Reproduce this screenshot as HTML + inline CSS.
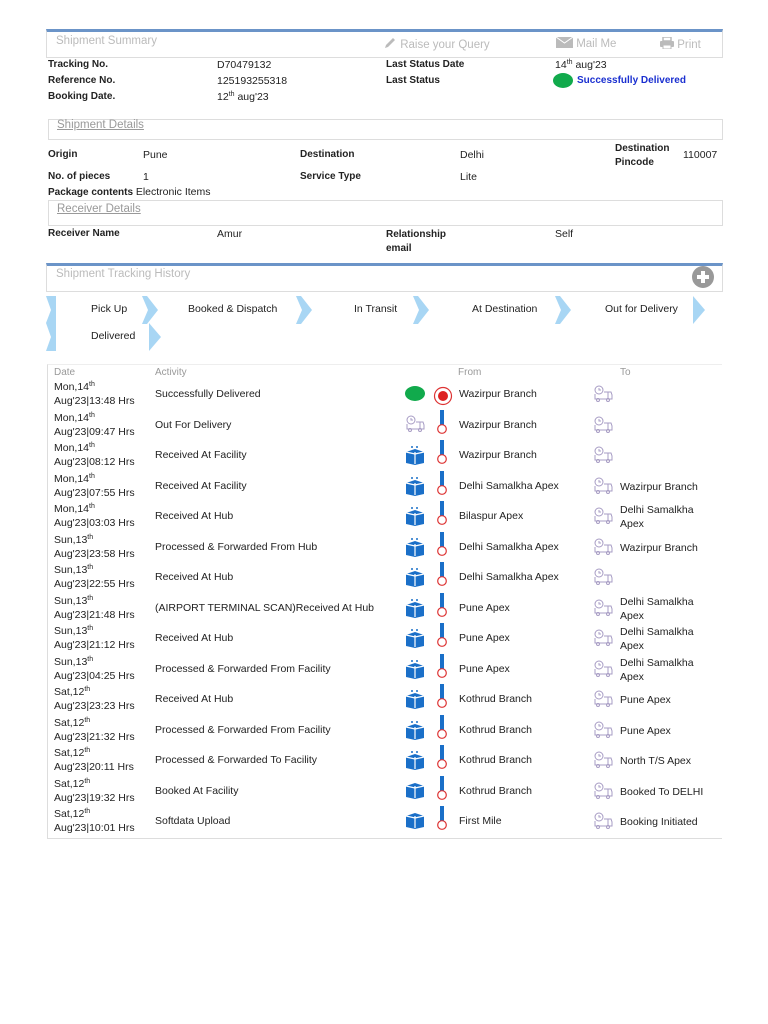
<!DOCTYPE html>
<html><head><meta charset="utf-8"><style>
body{margin:0;width:768px;height:1024px;background:#fff;font-family:"Liberation Sans",Arial,sans-serif;color:#222;position:relative;overflow:hidden}
.a{position:absolute;white-space:nowrap}
.b{font-weight:bold;font-size:10px}
.t{font-size:10.5px}
.g{color:#bbb;font-size:11.5px}
.box{position:absolute;border:1px solid #ddd;box-sizing:border-box}
sup{font-size:7px;vertical-align:4px;line-height:0}
.h{font-size:10px;color:#999}
</style></head><body>
<div class="box" style="left:46px;top:29px;width:677px;height:29px;border-top:3px solid #6b94c8"></div>
<div class="a g" style="left:56px;top:35px">Shipment Summary</div>
<div class="a g" style="left:384px;top:37px"><svg width="13" height="12" viewBox="0 0 13 12" style="vertical-align:-1px"><path d="M1 11l1-3 7-7 2 2-7 7z" fill="#bbb"/></svg> Raise your Query</div>
<div class="a g" style="left:556px;top:37px"><svg width="17" height="11" viewBox="0 0 17 11" style="vertical-align:-1px"><rect width="17" height="11" fill="#bbb"/><path d="M0 0l8.5 6L17 0" stroke="#fff" fill="none"/></svg> Mail Me</div>
<div class="a g" style="left:660px;top:37px"><svg width="14" height="12" viewBox="0 0 14 12" style="vertical-align:-1px"><rect x="3" y="0" width="8" height="4" fill="none" stroke="#bbb" stroke-width="1.5"/><rect x="0" y="4" width="14" height="6" rx="1" fill="#bbb"/><rect x="3" y="8" width="8" height="4" fill="#fff" stroke="#bbb"/></svg> Print</div>
<div class="a b" style="left:48px;top:59px">Tracking No.</div>
<div class="a b" style="left:48px;top:75px">Reference No.</div>
<div class="a b" style="left:48px;top:91px">Booking Date.</div>
<div class="a t" style="left:217px;top:59px">D70479132</div>
<div class="a t" style="left:217px;top:75px">125193255318</div>
<div class="a t" style="left:217px;top:91px">12<sup>th</sup> aug'23</div>
<div class="a b" style="left:386px;top:59px">Last Status Date</div>
<div class="a b" style="left:386px;top:75px">Last Status</div>
<div class="a t" style="left:555px;top:59px">14<sup>th</sup> aug'23</div>
<div class="a" style="left:553px;top:73px;width:20px;height:15px;border-radius:50%;background:#11aa4c"></div>
<div class="a b" style="left:577px;top:75px;color:#1a2fd0">Successfully Delivered</div>
<div class="box" style="left:48px;top:119px;width:675px;height:21px"></div>
<div class="a g" style="left:57px;top:119px;text-decoration:underline;color:#999">Shipment Details</div>
<div class="a b" style="left:48px;top:149px">Origin</div>
<div class="a t" style="left:143px;top:149px">Pune</div>
<div class="a b" style="left:300px;top:149px">Destination</div>
<div class="a t" style="left:460px;top:149px">Delhi</div>
<div class="a b" style="left:615px;top:142px;line-height:14px">Destination<br>Pincode</div>
<div class="a t" style="left:683px;top:149px">110007</div>
<div class="a b" style="left:48px;top:171px">No. of pieces</div>
<div class="a t" style="left:143px;top:171px">1</div>
<div class="a b" style="left:300px;top:171px">Service Type</div>
<div class="a t" style="left:460px;top:171px">Lite</div>
<div class="a b" style="left:48px;top:186px">Package contents <span style="font-weight:normal;font-size:10.5px">Electronic Items</span></div>
<div class="box" style="left:48px;top:200px;width:675px;height:26px"></div>
<div class="a g" style="left:57px;top:203px;text-decoration:underline;color:#999">Receiver Details</div>
<div class="a b" style="left:48px;top:228px">Receiver Name</div>
<div class="a t" style="left:217px;top:228px">Amur</div>
<div class="a b" style="left:386px;top:228px;line-height:14px">Relationship<br>email</div>
<div class="a t" style="left:555px;top:228px">Self</div>
<div class="box" style="left:46px;top:263px;width:677px;height:29px;border-top:3px solid #6b94c8"></div>
<div class="a g" style="left:56px;top:268px">Shipment Tracking History</div>
<div class="a" style="left:692px;top:266px;width:22px;height:22px;border-radius:50%;background:#999"><div class="a" style="left:5px;top:9px;width:12px;height:4px;background:#fff"></div><div class="a" style="left:9px;top:5px;width:4px;height:12px;background:#fff"></div></div>
<div id="chev"></div>
<div class="box" style="left:47px;top:364px;width:675px;height:475px;border-right:none;border-top-color:#eee"></div>
<div class="a h" style="left:54px;top:367px">Date</div>
<div class="a h" style="left:155px;top:367px">Activity</div>
<div class="a h" style="left:458px;top:367px">From</div>
<div class="a h" style="left:620px;top:367px">To</div>
<div id="rows"></div>
<script>
var c='';
function chev(x,y,h){return '<svg class="a" style="left:'+x+'px;top:'+y+'px" width="12" height="'+h+'" viewBox="0 0 12 '+h+'"><path d="M0 0L12 '+h/2+'L0 '+h+'z" fill="#a8d6f4"/></svg>';}
function chevN(x,y,h){return '<svg class="a" style="left:'+x+'px;top:'+y+'px" width="16" height="'+h+'" viewBox="0 0 16 '+h+'"><path d="M0 0H5L16 '+h/2+'L5 '+h+'H0L6 '+h/2+'z" fill="#a8d6f4"/></svg>';}
c+='<svg class="a" style="left:46px;top:296px" width="10" height="55" viewBox="0 0 10 55"><path d="M0 0H10V55H0L5 41L0 27L5 14z" fill="#a8d6f4"/></svg>';
c+=chevN(142,296,28)+chevN(296,296,28)+chevN(413,296,28)+chevN(555,296,28)+chev(693,296,28)+chev(149,323,28);
var L=[[91,'Pick Up'],[188,'Booked &amp; Dispatch'],[354,'In Transit'],[472,'At Destination'],[605,'Out for Delivery']];
L.forEach(function(l){c+='<div class="a t" style="left:'+l[0]+'px;top:303px">'+l[1]+'</div>'});
c+='<div class="a t" style="left:91px;top:330px">Delivered</div>';
document.getElementById('chev').innerHTML=c;
var truck='<svg width="20" height="18" viewBox="0 0 20 18"><g fill="none" stroke="#a79cc4" stroke-width="1"><circle cx="6" cy="5" r="4"/><path d="M6 3v2h2M2 9v5h13V7h3l1 3v4h-4M11 7h4"/><circle cx="5" cy="15" r="1.5"/><circle cx="15" cy="15" r="1.5"/></g></svg>';
var box='<svg width="20" height="18" viewBox="0 0 20 18"><path d="M1 5l9-3 9 3v11l-9 2-9-2z" fill="#1a6fc8"/><path d="M10 5v12M1 5l9 2 9-2" stroke="#fff" stroke-width="1.2" fill="none"/></svg>';
var boxd='<svg width="20" height="20" viewBox="0 0 20 20"><circle cx="7" cy="2" r="1" fill="#1a6fc8"/><circle cx="12" cy="2" r="1" fill="#1a6fc8"/><path d="M1 7l9-3 9 3v11l-9 2-9-2z" fill="#1a6fc8"/><path d="M10 7v12M1 7l9 2 9-2" stroke="#fff" stroke-width="1.2" fill="none"/></svg>';
var therm='<svg width="12" height="24" viewBox="0 0 12 24"><rect x="4" y="0" width="4" height="15" fill="#1a6fc8"/><circle cx="6" cy="19" r="4.3" fill="#fff" stroke="#d33" stroke-width="1.2"/></svg>';
var ring='<svg width="20" height="20" viewBox="0 0 20 20"><circle cx="10" cy="10" r="8.5" fill="none" stroke="#d33" stroke-width="1.2"/><circle cx="10" cy="10" r="5" fill="#d22"/></svg>';
var dot='<div style="width:20px;height:15px;border-radius:50%;background:#11aa4c;margin-top:2px"></div>';
var R=[['Mon,14','13:48','Successfully Delivered','dot','Wazirpur Branch',''],
['Mon,14','09:47','Out For Delivery','truck','Wazirpur Branch',''],
['Mon,14','08:12','Received At Facility','boxd','Wazirpur Branch',''],
['Mon,14','07:55','Received At Facility','boxd','Delhi Samalkha Apex','Wazirpur Branch'],
['Mon,14','03:03','Received At Hub','boxd','Bilaspur Apex','Delhi Samalkha<br>Apex'],
['Sun,13','23:58','Processed &amp; Forwarded From Hub','boxd','Delhi Samalkha Apex','Wazirpur Branch'],
['Sun,13','22:55','Received At Hub','boxd','Delhi Samalkha Apex',''],
['Sun,13','21:48','(AIRPORT TERMINAL SCAN)Received At Hub','boxd','Pune Apex','Delhi Samalkha<br>Apex'],
['Sun,13','21:12','Received At Hub','boxd','Pune Apex','Delhi Samalkha<br>Apex'],
['Sun,13','04:25','Processed &amp; Forwarded From Facility','boxd','Pune Apex','Delhi Samalkha<br>Apex'],
['Sat,12','23:23','Received At Hub','boxd','Kothrud Branch','Pune Apex'],
['Sat,12','21:32','Processed &amp; Forwarded From Facility','boxd','Kothrud Branch','Pune Apex'],
['Sat,12','20:11','Processed &amp; Forwarded To Facility','boxd','Kothrud Branch','North T/S Apex'],
['Sat,12','19:32','Booked At Facility','box','Kothrud Branch','Booked To DELHI'],
['Sat,12','10:01','Softdata Upload','box','First Mile','Booking Initiated']];
var h='';
R.forEach(function(r,i){var y=Math.round(394+i*30.5);
h+='<div class="a t" style="left:54px;top:'+(y-14)+'px;line-height:14px">'+r[0]+'<sup>th</sup><br>Aug\'23|'+r[1]+' Hrs</div>';
h+='<div class="a t" style="left:155px;top:'+(y-6)+'px">'+r[2]+'</div>';
var ic=r[3]=='dot'?dot:r[3]=='truck'?truck:r[3]=='box'?box:boxd;
h+='<div class="a" style="left:405px;top:'+(y-10)+'px">'+ic+'</div>';
h+='<div class="a" style="left:'+(i==0?433:436)+'px;top:'+(y-(i==0?8:15))+'px">'+(i==0?ring:therm)+'</div>';
h+='<div class="a t" style="left:459px;top:'+(y-6)+'px">'+r[4]+'</div>';
h+='<div class="a" style="left:593px;top:'+(y-9)+'px">'+truck+'</div>';
if(r[5]){var two=r[5].indexOf('<br>')>0;h+='<div class="a t" style="left:620px;top:'+(y-(two?13:6))+'px;line-height:14px">'+r[5]+'</div>';}
});
document.getElementById('rows').innerHTML=h;
</script>
</body></html>
